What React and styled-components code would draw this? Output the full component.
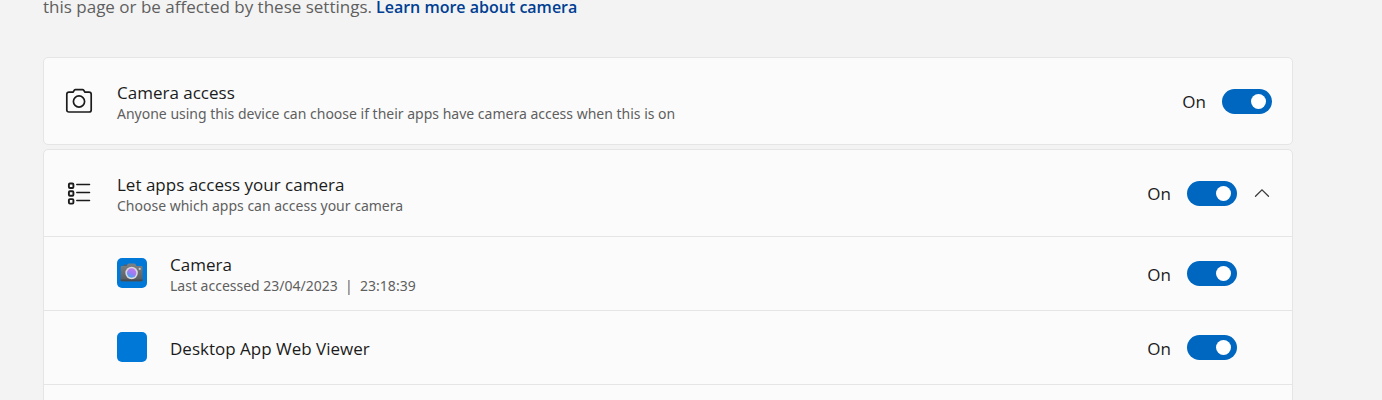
import React, { useState } from "react";
import styled, { createGlobalStyle } from "styled-components";

const GlobalStyle = createGlobalStyle`
* {
  box-sizing: border-box;
}
body {
  margin: 0;
  background: #f3f3f3;
  color: #1b1b1b;
  font-family: "Open Sans", "Noto Sans", sans-serif;
  font-size: 17px;
}
`;

const apps = [
  { id: "camera", name: "Camera", accessed: "Last accessed 23/04/2023\u00a0 |\u00a0 23:18:39" },
  { id: "web-viewer", name: "Desktop App Web Viewer" },
];

function CameraIcon() {
  return (
    <svg width="28" height="28" viewBox="0 0 28 28" fill="none" stroke="#1b1b1b" strokeWidth="1.7" strokeLinejoin="round" aria-hidden="true">
      <path d="M4 5.2H8L9.3 3.3Q9.7 2.7 10.4 2.7H17.6Q18.3 2.7 18.7 3.3L20 5.2H24Q26.2 5.2 26.2 7.3V22.9Q26.2 25 24 25H4Q1.8 25 1.8 22.9V7.3Q1.8 5.2 4 5.2Z" />
      <circle cx="14" cy="14.5" r="5.6" />
    </svg>
  );
}

function ListIcon() {
  return (
    <svg width="28" height="28" viewBox="0 0 28 28" fill="none" stroke="#1b1b1b" strokeWidth="1.9" aria-hidden="true">
      <rect x="3.9" y="4.5" width="4.5" height="4.5" rx="1" />
      <rect x="3.9" y="12.3" width="4.5" height="4.5" rx="1" />
      <rect x="3.9" y="20.1" width="4.5" height="4.5" rx="1" />
      <path d="M11.8 5.6H24.5M11.8 13.6H24.5M11.8 21.6H24.5" strokeWidth="1.5" strokeLinecap="round" />
    </svg>
  );
}

function CameraAppLogo() {
  return (
    <svg width="30" height="30" viewBox="0 0 30 30" aria-hidden="true">
      <defs>
        <linearGradient id="cameraBody" x1="0" y1="0" x2="0" y2="1">
          <stop offset="0" stopColor="#7d8286" />
          <stop offset="1" stopColor="#565b60" />
        </linearGradient>
        <linearGradient id="cameraLens" x1="0.8" y1="0.1" x2="0.3" y2="1">
          <stop offset="0" stopColor="#c07af0" />
          <stop offset="0.5" stopColor="#9a7cf5" />
          <stop offset="1" stopColor="#38adf0" />
        </linearGradient>
      </defs>
      <path d="M6.5 8V7.4Q6.5 6.6 7.3 6.6H9.2Q10 6.6 10 7.4V8Z" fill="#54616c" />
      <path d="M4.8 8H9.6L10.8 6Q11.2 5.4 12 5.4H17.2Q18 5.4 18.4 6L19.6 8H24.4Q25.6 8 25.6 9.2V22Q25.6 23.2 24.4 23.2H4.8Q3.6 23.2 3.6 22V9.2Q3.6 8 4.8 8Z" fill="url(#cameraBody)" />
      <path d="M3.6 21.6H25.6V22Q25.6 23.2 24.4 23.2H4.8Q3.6 23.2 3.6 22Z" fill="#454b50" />
      <circle cx="14.6" cy="15" r="6.2" fill="#d9dadd" />
      <circle cx="14.6" cy="15" r="4.7" fill="url(#cameraLens)" />
      <circle cx="22.7" cy="10.9" r="1.1" fill="#c8cbce" />
    </svg>
  );
}

function SettingToggle({ id, name }) {
  const [on, setOn] = useState(true);
  return (
    <ToggleLabel htmlFor={id}>
      <State>{on ? "On" : "Off"}</State>
      <Switch
        id={id}
        type="checkbox"
        aria-label={name}
        checked={on}
        onChange={(e) => setOn(e.target.checked)}
      />
    </ToggleLabel>
  );
}

function App() {
  const [open, setOpen] = useState(true);

  return (
    <Page>
      <GlobalStyle />
      <Intro>
        this page or be affected by these settings.
        <LearnMore href="#camera">Learn more about camera</LearnMore>
      </Intro>
      <Card>
        <Header>
          <IconSlot><CameraIcon /></IconSlot>
          <Texts>
            <Title>Camera access</Title>
            <Caption>Anyone using this device can choose if their apps have camera access when this is on</Caption>
          </Texts>
          <SettingToggle id="access" name="Camera access" />
        </Header>
      </Card>
      <Card>
        <Header>
          <IconSlot><ListIcon /></IconSlot>
          <Texts>
            <Title>Let apps access your camera</Title>
            <Caption>Choose which apps can access your camera</Caption>
          </Texts>
          <SettingToggle id="apps" name="Let apps access your camera" />
          <Expander type="button" aria-label="Show apps" aria-expanded={open} onClick={() => setOpen(!open)}>
            <Chevron $open={open} width="16" height="10" viewBox="0 0 16 10" fill="none" stroke="#3c3c3c" strokeWidth="1.3" strokeLinecap="round">
              <path d="M1.5 8.3L8 1.8L14.5 8.3" />
            </Chevron>
          </Expander>
        </Header>
        {open && apps.map((app) => (
          <AppRow key={app.id}>
            <AppTile>{app.id === "camera" && <CameraAppLogo />}</AppTile>
            <Texts>
              <Title>{app.name}</Title>
              {app.accessed && <Caption>{app.accessed}</Caption>}
            </Texts>
            <SettingToggle id={app.id} name={app.name} />
          </AppRow>
        ))}
        {open && <AppRow />}
      </Card>
    </Page>
  );
}

const Page = styled.main`
  height: 100vh;
  overflow: hidden;
  padding: 0 89px 0 43px;
`;

const Intro = styled.p`
  margin: 0 0 43px;
  line-height: 14px;
  color: #5f5f5f;
`;

const LearnMore = styled.a`
  margin-left: 4px;
  color: #003e92;
  font-size: 16px;
  font-weight: 600;
  text-decoration: none;
`;

const Card = styled.section`
  margin-bottom: 4px;
  background: #fbfbfb;
  border: 1px solid #e5e5e5;
  border-radius: 5px;
`;

const Row = styled.div`
  display: flex;
  align-items: center;
`;

const Header = styled(Row)`
  min-height: 86px;
  padding: 0 20px 0 21px;
`;

const AppRow = styled(Row)`
  min-height: 74px;
  padding: 0 55px 0 73px;
  border-top: 1px solid #e5e5e5;
`;

const IconSlot = styled.div`
  display: flex;
  width: 28px;
  margin-right: 24px;
`;

const AppTile = styled.div`
  width: 30px;
  height: 30px;
  margin: 0 23px 2px 0;
  border-radius: 5px;
  background: #0078d7;
`;

const Texts = styled.div`
  flex: 1;
  padding-top: 2px;
`;

const Title = styled.div`
  line-height: 22px;
`;

const Caption = styled.div`
  font-family: "Noto Sans", sans-serif;
  font-size: 14px;
  line-height: 19px;
  color: #5f5f5f;
`;

const ToggleLabel = styled.label`
  display: flex;
  align-items: center;
  gap: 16px;
`;

const State = styled.span`
  padding-top: 2px;
  line-height: 22px;
`;

const Switch = styled.input`
  appearance: none;
  display: flex;
  align-items: center;
  justify-content: ${(props) => (props.checked ? "flex-end" : "flex-start")};
  width: 50px;
  height: 25px;
  margin: 0;
  padding: 0 6px;
  border-radius: 13px;
  background: ${(props) => (props.checked ? "#0067c0" : "#8a8a8a")};

  &::before {
    content: "";
    width: 15px;
    height: 15px;
    border-radius: 50%;
    background: #fff;
  }
`;

const Expander = styled.button`
  display: flex;
  width: 18px;
  margin-left: 17px;
  padding: 0;
  border: 0;
  background: none;
`;

const Chevron = styled.svg`
  transform: ${(props) => (props.$open ? "none" : "rotate(180deg)")};
`;

export default App;
